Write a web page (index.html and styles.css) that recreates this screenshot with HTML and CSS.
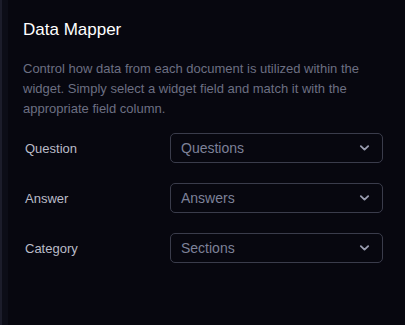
FILE: index.html
```html
<!DOCTYPE html>
<html>
<head>
<meta charset="utf-8">
<link rel="stylesheet" href="styles.css">
</head>
<body>
<div class="panel">
  <h1 class="title">Data Mapper</h1>
  <p class="desc">Control how data from each document is utilized within the widget. Simply select a widget field and match it with the appropriate field column.</p>
  <div class="rows">
    <div class="row">
      <span class="label">Question</span>
      <div class="select"><span>Questions</span><svg class="chev" viewBox="0 0 12 8" width="11" height="8"><path d="M2 2 L6 5.8 L10 2" fill="none" stroke="#9a9db0" stroke-width="2" stroke-linecap="round" stroke-linejoin="round"/></svg></div>
    </div>
    <div class="row">
      <span class="label">Answer</span>
      <div class="select"><span>Answers</span><svg class="chev" viewBox="0 0 12 8" width="11" height="8"><path d="M2 2 L6 5.8 L10 2" fill="none" stroke="#9a9db0" stroke-width="2" stroke-linecap="round" stroke-linejoin="round"/></svg></div>
    </div>
    <div class="row">
      <span class="label">Category</span>
      <div class="select"><span>Sections</span><svg class="chev" viewBox="0 0 12 8" width="11" height="8"><path d="M2 2 L6 5.8 L10 2" fill="none" stroke="#9a9db0" stroke-width="2" stroke-linecap="round" stroke-linejoin="round"/></svg></div>
    </div>
  </div>
</div>
</body>
</html>
```
FILE: styles.css
```css
html, body {
  margin: 0;
  padding: 0;
  height: 100%;
  background: #07070f;
}
body {
  font-family: "Liberation Sans", Arial, sans-serif;
}
.panel {
  box-sizing: border-box;
  height: 325px;
  border-left: 2px solid #1c1d2b;
  background: linear-gradient(to right, #0c0d17 0, #0c0d17 6px, #07070f 6px);
  padding: 20px 22px 0 21px;
}
.title {
  margin: 0;
  font-size: 17px;
  font-weight: 400;
  color: #ffffff;
  line-height: 20px;
}
.desc {
  margin: 19px 0 0;
  font-size: 13px;
  line-height: 20px;
  color: #6c6f82;
}
.rows {
  margin-top: 14px;
  display: flex;
  flex-direction: column;
  gap: 20px;
}
.row {
  display: flex;
  align-items: center;
  justify-content: space-between;
}
.label {
  font-size: 13px;
  color: #babcc8;
  padding-left: 2px;
}
.select {
  box-sizing: border-box;
  width: 213px;
  height: 30px;
  border: 1px solid #3a3c4b;
  border-radius: 5px;
  display: flex;
  align-items: center;
  justify-content: space-between;
  padding: 0 12px 0 10px;
  font-size: 14px;
  color: #7d8198;
}
.chev {
  display: block;
}
```
